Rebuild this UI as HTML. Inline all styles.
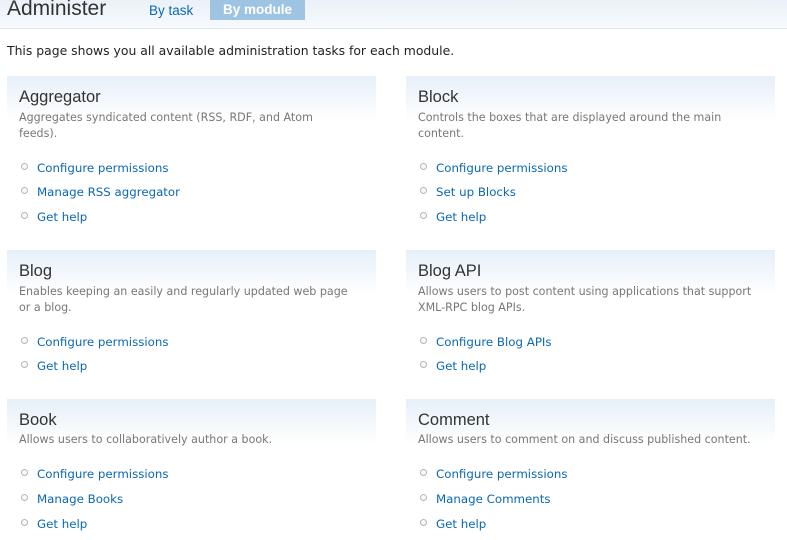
<!DOCTYPE html>
<html><head><meta charset="utf-8"><style>
body{margin:0;width:787px;height:540px;overflow:hidden;background:#fff;font-family:"DejaVu Sans","Liberation Sans",sans-serif;position:relative}
.hdr{position:absolute;left:0;top:0;width:787px;height:28px;background:linear-gradient(#eaf1f8,#f7fafd);border-bottom:1px solid #e3e9ef}
.t{position:absolute;white-space:nowrap}
.h1{left:7px;top:-3px;color:#333;font-family:"Liberation Sans",sans-serif;font-size:21px}
.tab1{left:149px;top:3px;color:#0a68b4;font-family:"Liberation Sans",sans-serif;font-size:13.5px}
.tab2{left:210px;top:0;width:95px;height:20px;background:#9dc4e2;color:#fff;font-weight:bold;font-size:13.5px;font-family:"Liberation Sans",sans-serif;text-align:center;line-height:20px}
.intro{left:7px;top:43px;font-size:12.4px;color:#222}
.box{position:absolute;width:369px;height:45px;background:linear-gradient(#e6eff8,#fff)}
.ti{font-size:16.5px;color:#333;font-family:"Liberation Sans",sans-serif}
.d{font-size:11.1px;color:#777;line-height:16px;white-space:normal;width:310px}
.l{font-size:11.8px;color:#0a68b4}
.b{position:absolute;width:5px;height:5px;border:1px solid #b5b5b5;border-radius:50%;background:#fafafa}
</style></head><body>
<div class="hdr"></div>
<div class="t h1">Administer</div>
<div class="t tab1">By task</div>
<div class="t tab2">By module</div>
<div class="t intro">This page shows you all available administration tasks for each module.</div>

<div class="box" style="left:7px;top:76px"></div>
<div class="box" style="left:406px;top:76px"></div>
<div class="box" style="left:7px;top:250px"></div>
<div class="box" style="left:406px;top:250px"></div>
<div class="box" style="left:7px;top:399px"></div>
<div class="box" style="left:406px;top:399px"></div>

<div class="t ti" style="left:19px;top:88px">Aggregator</div>
<div class="t d" style="left:19px;top:110px">Aggregates syndicated content (RSS, RDF, and Atom feeds).</div>
<div class="b" style="left:21px;top:163px"></div><div class="t l" style="left:37px;top:161px">Configure permissions</div>
<div class="b" style="left:21px;top:187px"></div><div class="t l" style="left:37px;top:185px">Manage RSS aggregator</div>
<div class="b" style="left:21px;top:212px"></div><div class="t l" style="left:37px;top:210px">Get help</div>

<div class="t ti" style="left:418px;top:88px">Block</div>
<div class="t d" style="left:418px;top:110px">Controls the boxes that are displayed around the main content.</div>
<div class="b" style="left:420px;top:163px"></div><div class="t l" style="left:436px;top:161px">Configure permissions</div>
<div class="b" style="left:420px;top:187px"></div><div class="t l" style="left:436px;top:185px">Set up Blocks</div>
<div class="b" style="left:420px;top:212px"></div><div class="t l" style="left:436px;top:210px">Get help</div>

<div class="t ti" style="left:19px;top:262px">Blog</div>
<div class="t d" style="left:19px;top:284px;width:336px">Enables keeping an easily and regularly updated web page or a blog.</div>
<div class="b" style="left:21px;top:337px"></div><div class="t l" style="left:37px;top:335px">Configure permissions</div>
<div class="b" style="left:21px;top:361px"></div><div class="t l" style="left:37px;top:359px">Get help</div>

<div class="t ti" style="left:418px;top:262px">Blog API</div>
<div class="t d" style="left:418px;top:284px;width:360px">Allows users to post content using applications that support XML-RPC blog APIs.</div>
<div class="b" style="left:420px;top:337px"></div><div class="t l" style="left:436px;top:335px">Configure Blog APIs</div>
<div class="b" style="left:420px;top:361px"></div><div class="t l" style="left:436px;top:359px">Get help</div>

<div class="t ti" style="left:19px;top:411px">Book</div>
<div class="t d" style="left:19px;top:432px">Allows users to collaboratively author a book.</div>
<div class="b" style="left:21px;top:469px"></div><div class="t l" style="left:37px;top:467px">Configure permissions</div>
<div class="b" style="left:21px;top:494px"></div><div class="t l" style="left:37px;top:492px">Manage Books</div>
<div class="b" style="left:21px;top:519px"></div><div class="t l" style="left:37px;top:517px">Get help</div>

<div class="t ti" style="left:418px;top:411px">Comment</div>
<div class="t d" style="left:418px;top:432px;width:370px">Allows users to comment on and discuss published content.</div>
<div class="b" style="left:420px;top:469px"></div><div class="t l" style="left:436px;top:467px">Configure permissions</div>
<div class="b" style="left:420px;top:494px"></div><div class="t l" style="left:436px;top:492px">Manage Comments</div>
<div class="b" style="left:420px;top:519px"></div><div class="t l" style="left:436px;top:517px">Get help</div>
</body></html>
